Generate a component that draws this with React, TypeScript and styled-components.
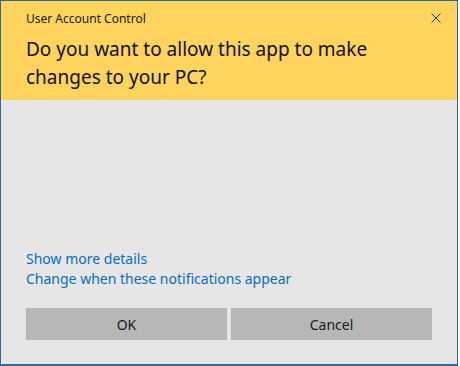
import styled, { createGlobalStyle } from "styled-components";

const GlobalStyle = createGlobalStyle`
  html, body {
    margin: 0;
    padding: 0;
    background: #ffffff;
  }
  body {
    font-family: "Noto Sans", "Open Sans", sans-serif;
  }
`;

const Window = styled.div`
  width: 458px;
  height: 366px;
  box-sizing: border-box;
  border: 1px solid #2b6a94;
  border-bottom-width: 2px;
  background-color: #e6e6e6;
  display: flex;
  flex-direction: column;
`;

const Banner = styled.div`
  background-color: #fed45f;
  padding: 8px 25px 12px 25px;
  height: 99px;
  box-sizing: border-box;
`;

const TitleRow = styled.div`
  display: flex;
  align-items: center;
  justify-content: space-between;
  height: 18px;
`;

const Title = styled.span`
  font-size: 12px;
  color: #1a1a1a;
`;

const Close = styled.button`
  border: none;
  background: none;
  padding: 0;
  margin-right: -11px;
  width: 14px;
  height: 14px;
  display: flex;
  align-items: center;
  justify-content: center;
  cursor: pointer;
`;

const Question = styled.h1`
  margin: 8px 0 0 0;
  font-size: 19px;
  font-weight: 400;
  line-height: 28px;
  color: #111111;
`;

const Body = styled.div`
  flex: 1;
  display: flex;
  flex-direction: column;
  padding: 0 25px 24px 25px;
`;

const Links = styled.div`
  margin-top: auto;
  display: flex;
  flex-direction: column;
  align-items: flex-start;
`;

const LinkText = styled.a`
  font-size: 14px;
  line-height: 20px;
  color: #0a6cc0;
  text-decoration: none;
  cursor: pointer;
`;

const Buttons = styled.div`
  display: grid;
  grid-template-columns: 1fr 1fr;
  gap: 4px;
  margin-top: 19px;
`;

const Button = styled.button`
  height: 32px;
  border: none;
  background-color: #b7b7b7;
  font-family: "Noto Sans", "Open Sans", sans-serif;
  font-size: 14px;
  color: #1a1a1a;
  cursor: pointer;
`;

export default function App() {
  return (
    <>
      <GlobalStyle />
      <Window>
        <Banner>
          <TitleRow>
            <Title>User Account Control</Title>
            <Close aria-label="Close">
              <svg width="10" height="10" viewBox="0 0 10 10">
                <path d="M0.5 0.5 L9.5 9.5 M9.5 0.5 L0.5 9.5" stroke="#333" strokeWidth="1" />
              </svg>
            </Close>
          </TitleRow>
          <Question>
            Do you want to allow this app to make changes to your PC?
          </Question>
        </Banner>
        <Body>
          <Links>
            <LinkText>Show more details</LinkText>
            <LinkText>Change when these notifications appear</LinkText>
          </Links>
          <Buttons>
            <Button>OK</Button>
            <Button>Cancel</Button>
          </Buttons>
        </Body>
      </Window>
    </>
  );
}
